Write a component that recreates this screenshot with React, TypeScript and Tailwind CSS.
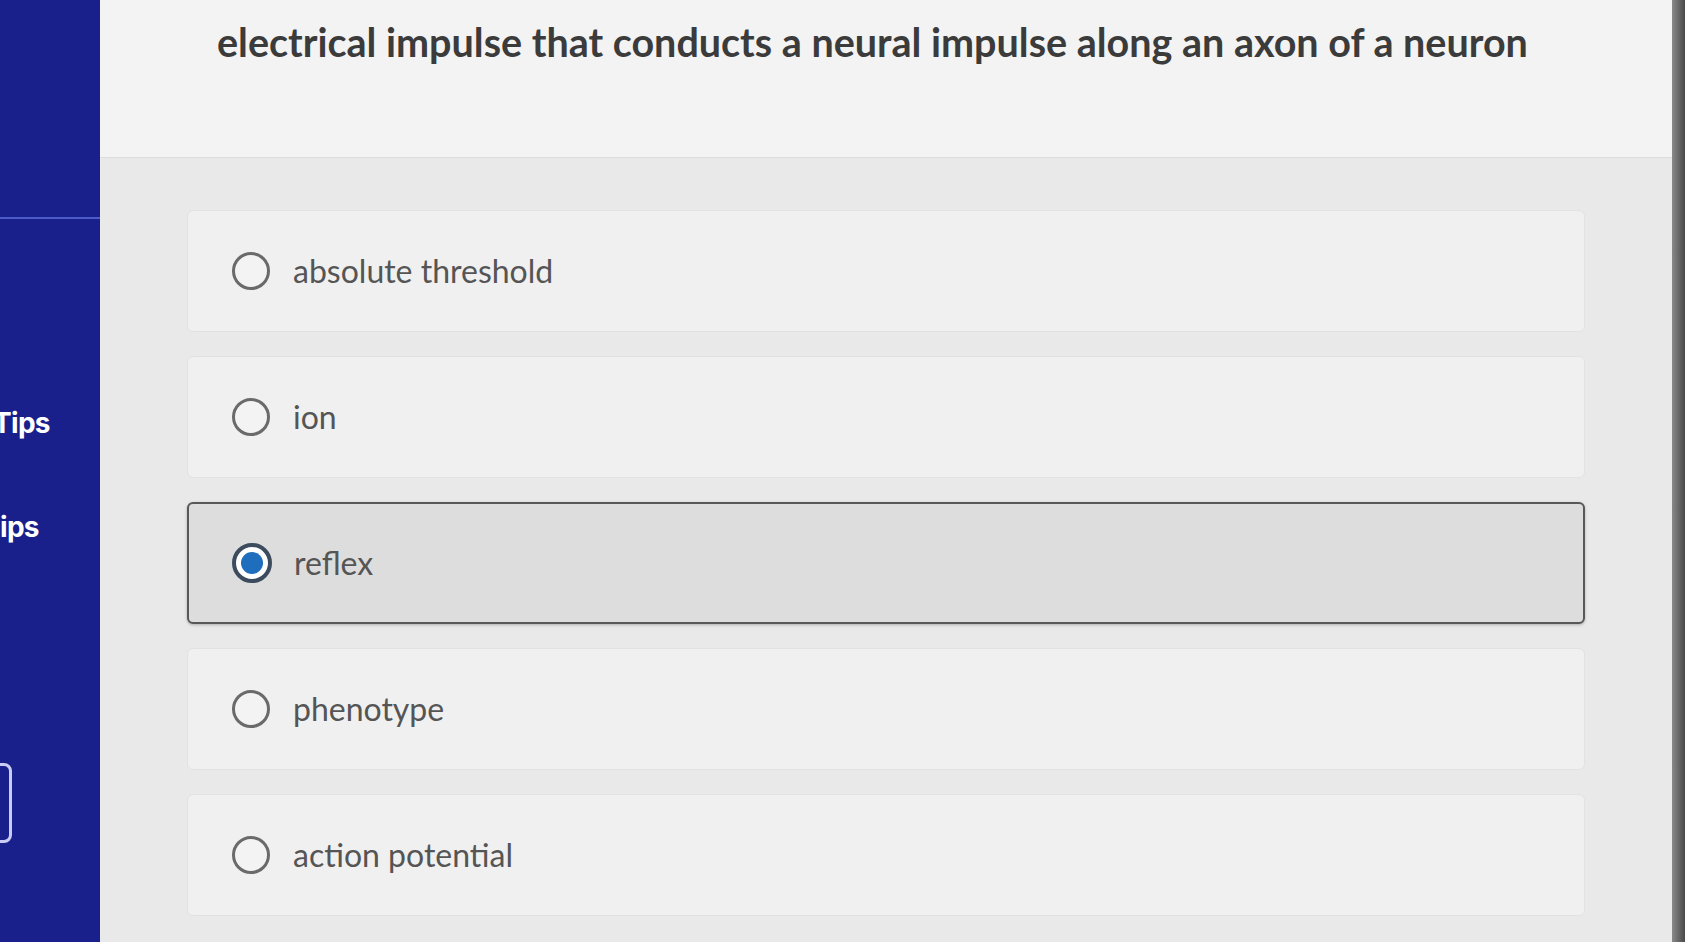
import React from "react";

const options = [
  { id: "a", label: "absolute threshold" },
  { id: "b", label: "ion" },
  { id: "c", label: "reflex" },
  { id: "d", label: "phenotype" },
  { id: "e", label: "action potential" },
];

function Radio({ checked }: { checked: boolean }) {
  if (checked) {
    return (
      <span className="flex h-[40px] w-[40px] shrink-0 items-center justify-center rounded-full border-[4px] border-[#3d4b5e] bg-white">
        <span className="h-[22px] w-[22px] rounded-full bg-[#1f6dbd]" />
      </span>
    );
  }
  return <span className="h-[38px] w-[38px] shrink-0 rounded-full border-[3px] border-[#6a6a6a] bg-[#f3f3f3]" />;
}

export default function App() {
  const [selected, setSelected] = React.useState("c");

  return (
    <div className="flex h-[942px] w-[1685px] overflow-hidden bg-[#e8e8e8] font-['Lato','Open_Sans',sans-serif]">
      {/* Sidebar */}
      <aside className="flex w-[100px] shrink-0 flex-col overflow-hidden bg-[#19208c] font-['Inter',sans-serif] text-white">
        <div className="h-[219px] border-b-2 border-[#4c5bc9]" />
        <p className="-ml-[7px] mt-[190px] text-[28px] font-bold leading-none tracking-tight">Tips</p>
        <p className="mt-[76px] text-[28px] font-bold leading-none tracking-tight">ips</p>
        <div className="-ml-[30px] mt-[222px] h-[80px] w-[42px] rounded-lg border-[3px] border-[#c9cdf6]" />
      </aside>

      {/* Main */}
      <main className="flex min-w-0 flex-1 flex-col">
        <header className="h-[158px] shrink-0 border-b border-[#dcdcdc] bg-[#f3f3f3] pl-[117px] pt-[18px]">
          <h1 className="text-[39.5px] font-bold leading-[1.2] text-[#3b3b3b]">
            electrical impulse that conducts a neural impulse along an axon of a neuron
          </h1>
        </header>

        <div className="flex flex-1 flex-col gap-[24px] bg-[#e9e9e9] px-[87px] pt-[52px]">
          {options.map((o) => {
            const checked = selected === o.id;
            return (
              <label
                key={o.id}
                onClick={() => setSelected(o.id)}
                className={
                  checked
                    ? "flex h-[122px] cursor-pointer items-center gap-[22px] rounded-md border-2 border-[#585858] bg-[#dddddd] pl-[43px] shadow-[0_1px_3px_rgba(0,0,0,0.25)]"
                    : "flex h-[122px] cursor-pointer items-center gap-[23px] rounded-md border border-[#e2e2e2] bg-[#f0f0f0] pl-[44px]"
                }
              >
                <Radio checked={checked} />
                <span className="text-[32px] leading-none text-[#555555]">{o.label}</span>
              </label>
            );
          })}
        </div>
      </main>

      {/* Screen edge */}
      <div className="w-[13px] shrink-0 bg-gradient-to-r from-[#8a8a8a] to-[#4a4a4a]" />
    </div>
  );
}
